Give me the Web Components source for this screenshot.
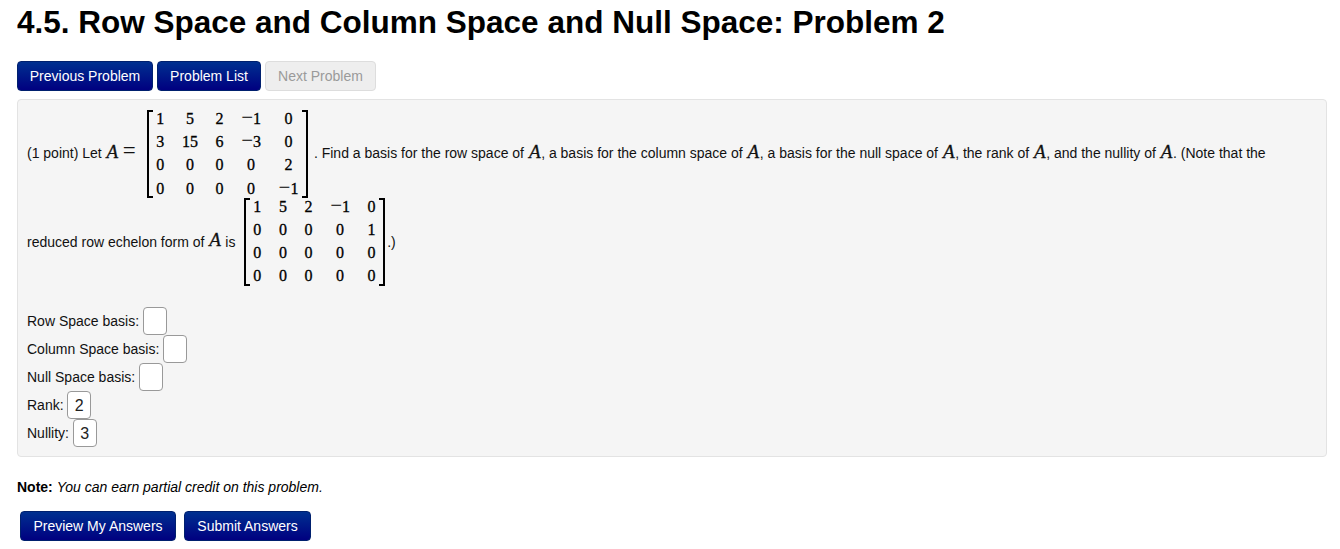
<!DOCTYPE html>
<html>
<head>
<meta charset="utf-8">
<title>Problem 2</title>
<style>
  html, body { margin: 0; background: #fff; }
  body { font: 14px/20px "Liberation Sans", Arial, sans-serif; color: #111; overflow: hidden; }
</style>
</head>
<body>
<problem-page>
  <page-title slot="title">4.5. Row Space and Column Space and Null Space: Problem 2</page-title>
  <button-bar slot="nav">
    <nav-button style="width:136px">Previous Problem</nav-button>
    <nav-button style="width:104px">Problem List</nav-button>
    <nav-button style="width:111px" disabled>Next Problem</nav-button>
  </button-bar>
  <problem-panel slot="panel">
    <problem-line>(1 point) Let <math-var>A</math-var> <math-var plain>=</math-var> <math-matrix rows="1 5 2 -1 0;3 15 6 -3 0;0 0 0 0 2;0 0 0 0 -1"></math-matrix> . Find a basis for the row space of <math-var>A</math-var>, a basis for the column space of <math-var>A</math-var>, a basis for the null space of <math-var>A</math-var>, the rank of <math-var>A</math-var>, and the nullity of <math-var>A</math-var>. (Note that the</problem-line>
    <problem-line>reduced row echelon form of <math-var style="margin-right:0">A</math-var> is <math-matrix style="margin-bottom:2px" rows="1 5 2 -1 0;0 0 0 0 1;0 0 0 0 0;0 0 0 0 0"></math-matrix>.)</problem-line>
    <answer-list>
      <answer-row label="Row Space basis:"></answer-row>
      <answer-row label="Column Space basis:"></answer-row>
      <answer-row label="Null Space basis:"></answer-row>
      <answer-row label="Rank:">2</answer-row>
      <answer-row label="Nullity:">3</answer-row>
    </answer-list>
  </problem-panel>
  <credit-note slot="note"><b>Note:</b> <i>You can earn partial credit on this problem.</i></credit-note>
  <button-bar slot="actions" wide>
    <nav-button style="width:156px">Preview My Answers</nav-button>
    <nav-button style="width:127px">Submit Answers</nav-button>
  </button-bar>
</problem-page>

<script>
function shadow(el, html) {
  el.attachShadow({ mode: "open" });
  el.shadowRoot.innerHTML = html;
}

class ProblemPage extends HTMLElement {
  constructor() {
    super();
    shadow(this, `
      <style>
        :host { display: block; padding: 0 13px 0 17px; }
        .actions { margin: 14px 0 0 3px; }
      </style>
      <slot name="title"></slot>
      <slot name="nav"></slot>
      <slot name="panel"></slot>
      <slot name="note"></slot>
      <div class="actions"><slot name="actions"></slot></div>
    `);
  }
}

class PageTitle extends HTMLElement {
  constructor() {
    super();
    shadow(this, `
      <style>
        :host { display: block; font-size: 31.5px; line-height: 36px; font-weight: bold; color: #000; padding: 4px 0 21px; }
      </style>
      <slot></slot>
    `);
  }
}

class ButtonBar extends HTMLElement {
  constructor() {
    super();
    shadow(this, `
      <style>
        :host { display: flex; gap: 4px; }
        :host([wide]) { gap: 8px; }
      </style>
      <slot></slot>
    `);
  }
}

class NavButton extends HTMLElement {
  constructor() {
    super();
    shadow(this, `
      <style>
        :host {
          display: block; box-sizing: border-box; height: 30px; text-align: center;
          line-height: 28px; font-size: 14px; color: #fff; white-space: nowrap;
          border: 1px solid #00206e; border-radius: 4px;
          background: linear-gradient(#003090, #000080);
        }
        :host([disabled]) { color: #9a9a9a; background: #eee; border-color: #ddd; }
      </style>
      <slot></slot>
    `);
  }
}

class ProblemPanel extends HTMLElement {
  constructor() {
    super();
    shadow(this, `
      <style>
        :host {
          display: block; margin-top: 8px; padding: 10px 9px 9px; height: 358px; box-sizing: border-box;
          background: #f5f5f5; border: 1px solid #e3e3e3; border-radius: 4px;
        }
      </style>
      <slot></slot>
    `);
  }
}

class ProblemLine extends HTMLElement {
  constructor() {
    super();
    shadow(this, `
      <style>
        :host { display: block; white-space: nowrap; }
      </style>
      <slot></slot>
    `);
  }
}

class MathVar extends HTMLElement {
  constructor() {
    super();
    shadow(this, `
      <style>
        :host {
          font: italic 19px "Liberation Serif", "Times New Roman", serif;
          -webkit-text-stroke: 0.3px currentColor; margin: 0 -3.8px 0 1px;
        }
        :host([plain]) { font-style: normal; font-size: 23px; line-height: 0; -webkit-text-stroke: 0; margin: 0 1px 0 3.8px; }
      </style>
      <slot></slot>
    `);
  }
}

class MathMatrix extends HTMLElement {
  constructor() {
    super();
    const rows = this.getAttribute("rows").split(";").map((r) => r.split(" "));
    const cells = rows
      .map((r) => r.map((c) => `<span>${c.replace("-", '<i class="minus">\u2212</i>')}</span>`).join(""))
      .join("");
    shadow(this, `
      <style>
        :host { display: inline-flex; vertical-align: middle; margin: 0 2px 0 5px; }
        .grid {
          display: grid; grid-template-columns: repeat(${rows[0].length}, auto);
          grid-auto-rows: 23.2px; column-gap: 17.6px; padding: 0 3.6px 0 3px; margin: -3px 0 -2px;
          font: 16px/23px "Liberation Serif", "Times New Roman", serif; color: #000;
          -webkit-text-stroke: 0.3px #000;
        }
        span { text-align: center; }
        .minus { font-style: normal; font-size: 21px; line-height: 0; -webkit-text-stroke: 0; }
        .br { width: 4px; border: 2px solid #000; }
        .l { border-right: 0; }
        .r { border-left: 0; }
      </style>
      <div class="br l"></div>
      <div class="grid">${cells}</div>
      <div class="br r"></div>
    `);
  }
}

class AnswerList extends HTMLElement {
  constructor() {
    super();
    shadow(this, `
      <style>
        :host { display: block; margin-top: 19px; }
      </style>
      <slot></slot>
    `);
  }
}

class AnswerRow extends HTMLElement {
  constructor() {
    super();
    shadow(this, `
      <style>
        :host { display: flex; align-items: center; gap: 3.6px; height: 28px; }
        .box {
          box-sizing: border-box; width: 24px; height: 28px; background: #fff;
          border: 1px solid #999; border-radius: 4px; text-align: center;
          font-size: 16px; line-height: 28px; color: #222;
        }
      </style>
      <span>${this.getAttribute("label")}</span>
      <div class="box"><slot></slot></div>
    `);
  }
}

class CreditNote extends HTMLElement {
  constructor() {
    super();
    shadow(this, `
      <style>
        :host { display: block; margin-top: 20px; color: #000; }
      </style>
      <slot></slot>
    `);
  }
}

customElements.define("problem-page", ProblemPage);
customElements.define("page-title", PageTitle);
customElements.define("button-bar", ButtonBar);
customElements.define("nav-button", NavButton);
customElements.define("problem-panel", ProblemPanel);
customElements.define("problem-line", ProblemLine);
customElements.define("math-var", MathVar);
customElements.define("math-matrix", MathMatrix);
customElements.define("answer-list", AnswerList);
customElements.define("answer-row", AnswerRow);
customElements.define("credit-note", CreditNote);
</script>
</body>
</html>
